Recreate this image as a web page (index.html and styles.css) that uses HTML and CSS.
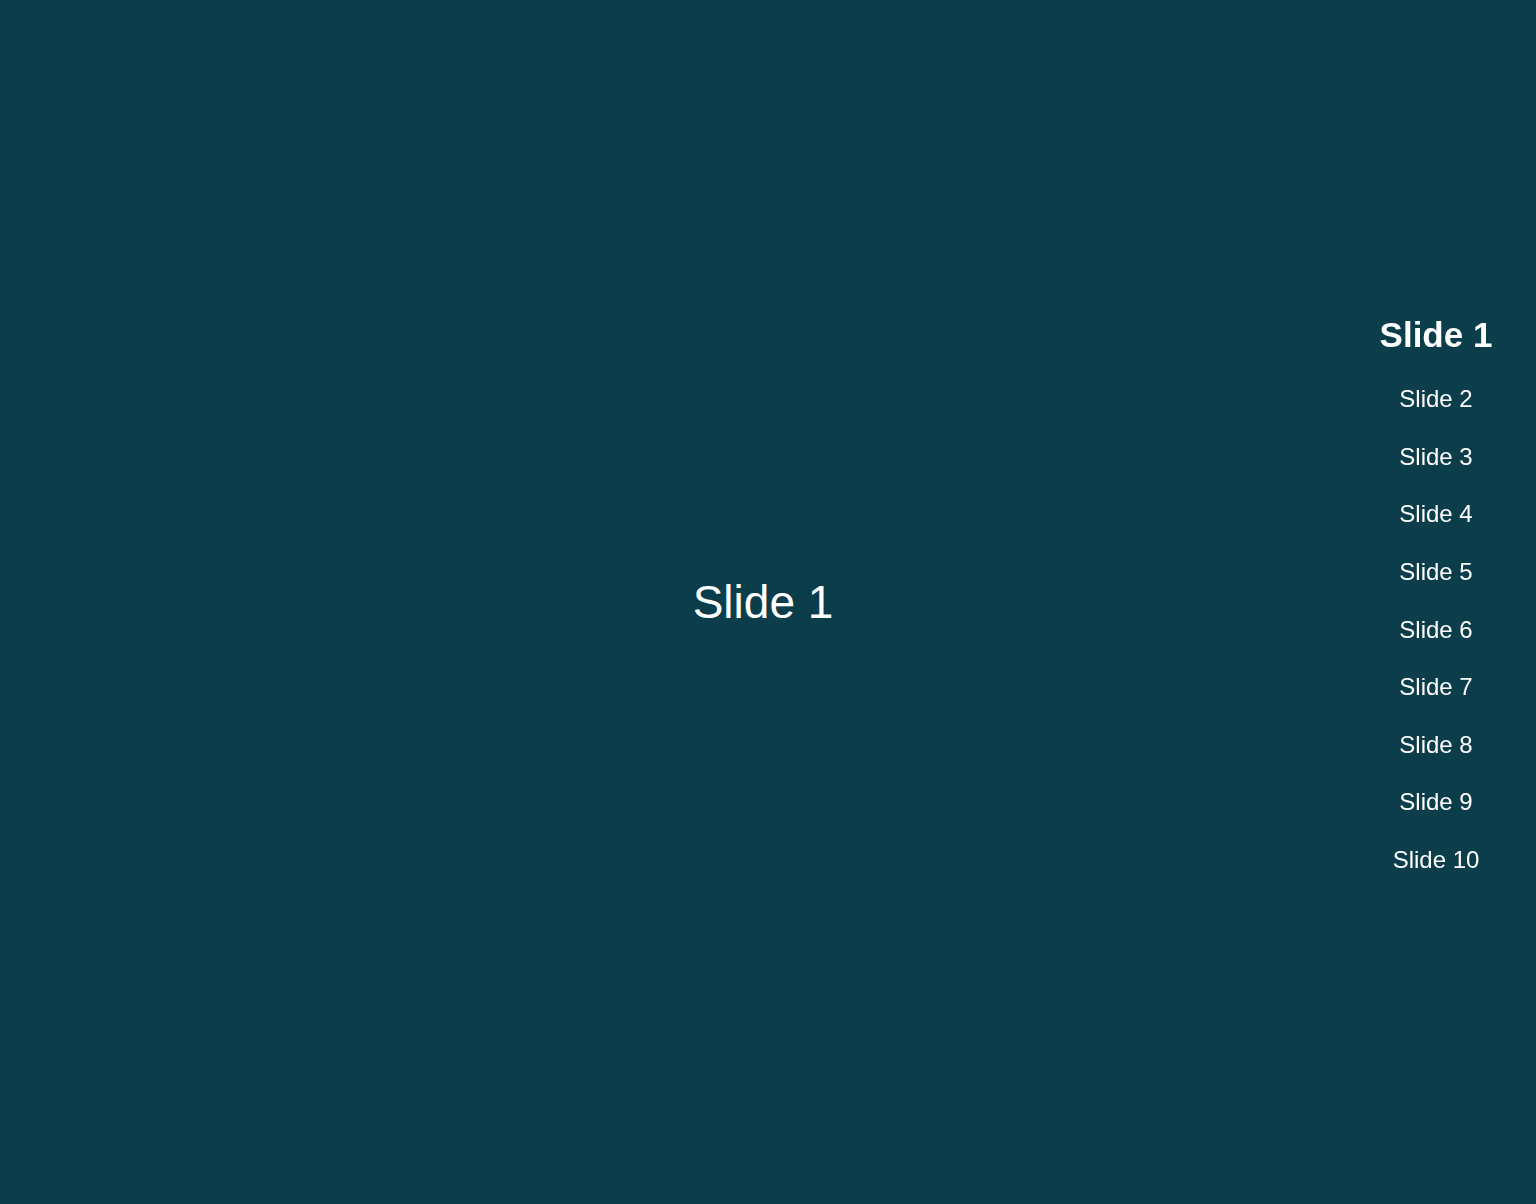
FILE: index.html
```html
<!DOCTYPE html>
<html lang="en">
<head>
<meta charset="utf-8">
<title>Slides</title>
<link rel="stylesheet" href="styles.css">
</head>
<body>
<main class="slide">
  <h1 class="slide-title">Slide 1</h1>
</main>
<nav class="slide-nav">
  <ul class="nav-list">
    <li class="nav-item active">Slide 1</li>
    <li class="nav-item">Slide 2</li>
    <li class="nav-item">Slide 3</li>
    <li class="nav-item">Slide 4</li>
    <li class="nav-item">Slide 5</li>
    <li class="nav-item">Slide 6</li>
    <li class="nav-item">Slide 7</li>
    <li class="nav-item">Slide 8</li>
    <li class="nav-item">Slide 9</li>
    <li class="nav-item">Slide 10</li>
  </ul>
</nav>
</body>
</html>
```
FILE: styles.css
```css
html, body {
  margin: 0;
  padding: 0;
  height: 100%;
}
body {
  background: #0c3d4a;
  color: #ffffff;
  font-family: "Liberation Sans", Arial, sans-serif;
  overflow: hidden;
}
.slide {
  height: 100vh;
  box-sizing: border-box;
  padding-right: 10px;
  display: flex;
  align-items: center;
  justify-content: center;
}
.slide-title {
  margin: 0;
  font-size: 46px;
  font-weight: 400;
  line-height: 1.15;
}
.slide-nav {
  position: fixed;
  top: 300px;
  right: 0;
  width: 200px;
}
.nav-list {
  list-style: none;
  margin: 0;
  padding: 0;
  text-align: center;
}
.nav-item {
  font-size: 24px;
  line-height: 1.15;
  padding: 15px 0;
}
.nav-item.active {
  font-size: 35px;
  font-weight: 700;
}
```
